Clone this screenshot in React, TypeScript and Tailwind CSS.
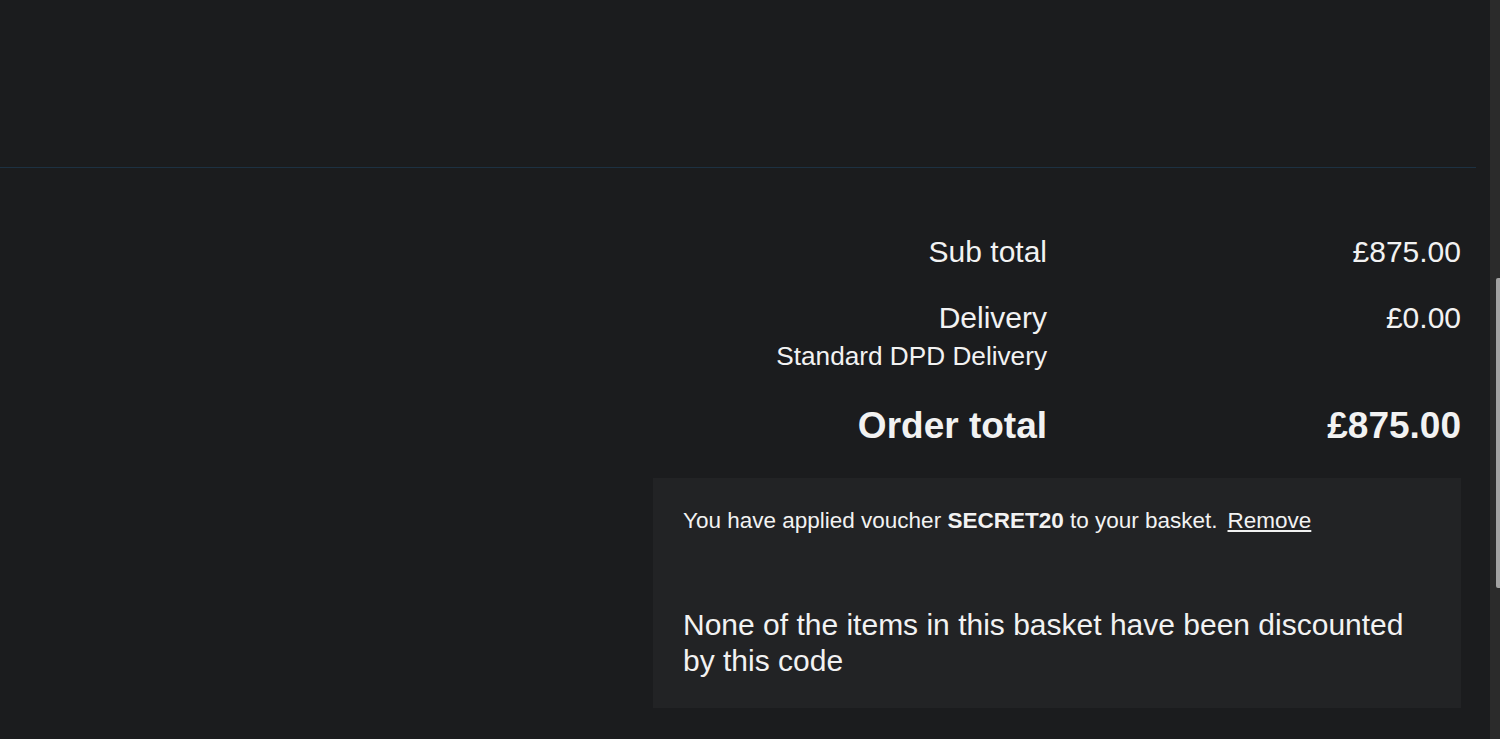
import React from 'react';

const rows = [
  { label: 'Sub total', value: '£875.00' },
];

const App: React.FC = () => {
  return (
    <div
      className="flex h-[739px] w-full overflow-hidden bg-[#1b1c1e] text-[#f2f2f2]"
      style={{ fontFamily: '"Liberation Sans", Arial, sans-serif' }}
    >
      {/* Page */}
      <div className="flex-1 flex flex-col mr-[14px]">
        <div className="h-[168px] border-b-[1.5px] border-[#1d3142]" />

        {/* Basket summary */}
        <div className="ml-auto mr-[15px] w-[808px] pt-[66px]">
          {rows.map(r => (
            <div key={r.label} className="flex text-[30px] leading-[36px]">
              <div className="w-[394px] text-right">{r.label}</div>
              <div className="flex-1 text-right">{r.value}</div>
            </div>
          ))}

          <div className="flex mt-[30px]">
            <div className="w-[394px] text-right">
              <div className="text-[30px] leading-[36px]">Delivery</div>
              <div className="text-[26.2px] leading-[40px]">Standard DPD Delivery</div>
            </div>
            <div className="flex-1 text-right text-[30px] leading-[36px]">£0.00</div>
          </div>

          <div className="flex mt-[28px] text-[37px] leading-[44px] font-bold">
            <div className="w-[394px] text-right">Order total</div>
            <div className="flex-1 text-right">£875.00</div>
          </div>

          {/* Voucher */}
          <div className="mt-[30px] bg-[#222325] px-[30px] pt-[29px] pb-[29px]">
            <p className="text-[22.5px] leading-[28px]">
              You have applied voucher <strong>SECRET20</strong> to your basket.
              <a href="#" className="ml-[10px] underline">Remove</a>
            </p>
            <p className="mt-[72px] text-[30px] leading-[36px]">
              None of the items in this basket have been discounted by this code
            </p>
          </div>
        </div>
      </div>

      {/* Scrollbar */}
      <div className="w-[10px] bg-[#2b2b2b] flex justify-end">
        <div className="mt-[278px] h-[310px] w-[4px] rounded-l-[2px] bg-[#a3a3a3]" />
      </div>
    </div>
  );
};

export default App;
